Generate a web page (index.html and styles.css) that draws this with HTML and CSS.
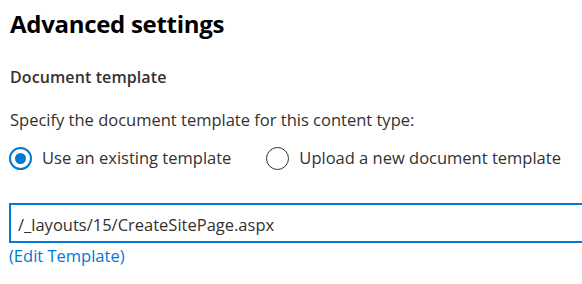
FILE: index.html
```html
<!DOCTYPE html>
<html lang="en">
<head>
<meta charset="UTF-8">
<title>Advanced settings</title>
<link rel="stylesheet" href="styles.css">
</head>
<body>
<main class="settings">
  <h1 class="title">Advanced settings</h1>
  <h2 class="section">Document template</h2>
  <p class="desc">Specify the document template for this content type:</p>
  <div class="choices">
    <label class="radio checked"><span class="circle"></span>Use an existing template</label>
    <label class="radio"><span class="circle"></span>Upload a new document template</label>
  </div>
  <div class="field">/_layouts/15/CreateSitePage.aspx</div>
  <a class="edit" href="#">(Edit Template)</a>
</main>
</body>
</html>
```

FILE: styles.css
```css
*{box-sizing:border-box; margin:0; padding:0;}
body{ background:#fff; color:#323130; font-family:'Open Sans','Noto Sans',sans-serif;}
a{text-decoration:none;}
.settings{ padding:8px 0 0 9px; width:100%; overflow:hidden;}
.title{ font-size:24px; font-weight:700; color:#000; line-height:32px; padding-left:1px; letter-spacing:-0.3px;}
.section{ font-size:16px; font-weight:600; color:#323130; line-height:20px; margin-top:27px; padding-left:1px; letter-spacing:0.1px;}
.desc{ font-size:16.5px; line-height:22px; margin-top:22px; padding-left:1px;}
.choices{ display:flex; gap:35px; margin-top:15px;}
.radio{ display:flex; align-items:center; gap:10px; font-size:16.5px; line-height:24px;}
.circle{ width:23px; height:23px; border-radius:50%; border:1px solid #323130; display:flex; align-items:center; justify-content:center;}
.radio.checked .circle{ border:2px solid #0078d4;}
.radio.checked .circle::after{ content:""; width:11px; height:11px; border-radius:50%; background:#0078d4;}
.field{ margin:33px -20px 0 0; height:40px; border:2px solid #0078d4; padding:2px 7px 0; display:flex; align-items:center; font-size:16.5px; color:#323130;}
.edit{ display:inline-block; margin-top:3px; font-size:16.5px; line-height:20px; color:#0078d4;}
```
